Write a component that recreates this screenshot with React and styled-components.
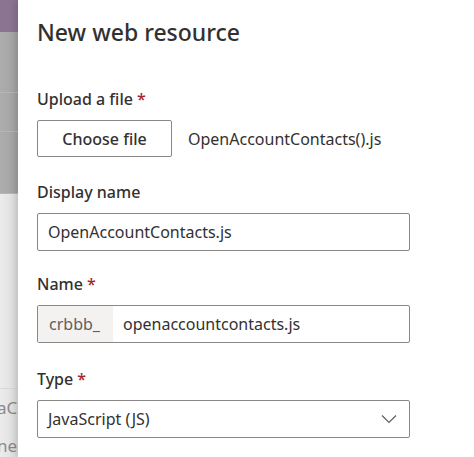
import React from "react";
import styled, { createGlobalStyle } from "styled-components";

const GlobalStyle = createGlobalStyle`
  html, body {
    margin: 0;
    padding: 0;
    background: #fff;
  }
  body {
    font-family: "Noto Sans", "Open Sans", "Liberation Sans", sans-serif;
    color: #323130;
  }
`;

const Page = styled.div`
  display: flex;
  width: 474px;
  height: 457px;
  overflow: hidden;
`;

const Backdrop = styled.div`
  width: 18px;
  flex: none;
  display: flex;
  flex-direction: column;
  overflow: hidden;
`;

const BackdropHeader = styled.div`
  flex: none;
  height: 32px;
  background: #8b7392;
`;

const BackdropBand = styled.div`
  flex: none;
  height: ${(p) => p.h}px;
  background: linear-gradient(90deg, #adadad, #a2a2a2);
  border-bottom: 1px solid #b6b6b6;
`;

const BackdropLower = styled.div`
  flex: 1;
  min-height: 0;
  overflow: hidden;
  background: linear-gradient(90deg, #ececec, #dcdcdc);
  display: flex;
  flex-direction: column;
  padding-top: 194px;
`;

const BackdropText = styled.div`
  flex: none;
  font-size: 17px;
  color: #8a8a8a;
  white-space: nowrap;
  height: ${(p) => p.h}px;
  line-height: ${(p) => p.h}px;
  border-top: ${(p) => (p.line ? "1px solid #d6d6d6" : "none")};
  margin-left: -3px;
`;

const Panel = styled.div`
  flex: 1;
  background: #fff;
  box-shadow: -3px 0 6px rgba(0, 0, 0, 0.12);
  padding: 14px 0 0 19px;
  display: flex;
  flex-direction: column;
`;

const Title = styled.h1`
  margin: 0 0 38px 0;
  font-size: 23px;
  font-weight: 500;
  line-height: 36px;
  color: #323130;
`;

const Field = styled.div`
  display: flex;
  flex-direction: column;
  margin-bottom: ${(p) => p.mb}px;
`;

const Label = styled.label`
  font-size: 16px;
  font-weight: 500;
  line-height: 22px;
  margin-bottom: 10px;
  color: #323130;
`;

const Required = styled.span`
  color: #a4262c;
  margin-left: 4px;
`;

const UploadRow = styled.div`
  display: flex;
  align-items: center;
  gap: 16px;
`;

const ChooseButton = styled.button`
  width: 135px;
  height: 37px;
  background: #fff;
  border: 1px solid #8a8886;
  border-radius: 2px;
  font-family: inherit;
  font-size: 16px;
  font-weight: 500;
  color: #323130;
  padding: 0;
`;

const FileName = styled.span`
  font-size: 16px;
  color: #323130;
`;

const Box = styled.div`
  width: 373px;
  height: 38px;
  box-sizing: border-box;
  border: 1px solid #8a8886;
  border-radius: 2px;
  display: flex;
  align-items: stretch;
  font-size: 16px;
  color: #323130;
`;

const Prefix = styled.div`
  background: #f3f2f1;
  color: #605e5c;
  display: flex;
  align-items: center;
  padding: 0 10px 0 11px;
  width: 54px;
`;

const Value = styled.div`
  flex: 1;
  display: flex;
  align-items: center;
  padding-left: 10px;
`;

const Chevron = styled.div`
  width: 40px;
  display: flex;
  align-items: center;
  justify-content: center;
  color: #605e5c;
`;

export default function App() {
  return (
    <>
      <GlobalStyle />
      <Page>
        <Backdrop>
          <BackdropHeader />
          <BackdropBand h={60} />
          <BackdropBand h={38} />
          <BackdropBand h={61} />
          <BackdropLower>
            <BackdropText h={38} line>aC</BackdropText>
            <BackdropText h={38}>ne</BackdropText>
          </BackdropLower>
        </Backdrop>
        <Panel>
          <Title>New web resource</Title>
          <Field mb={24}>
            <Label>
              Upload a file<Required>*</Required>
            </Label>
            <UploadRow>
              <ChooseButton>Choose file</ChooseButton>
              <FileName>OpenAccountContacts().js</FileName>
            </UploadRow>
          </Field>
          <Field mb={22}>
            <Label>Display name</Label>
            <Box>
              <Value>OpenAccountContacts.js</Value>
            </Box>
          </Field>
          <Field mb={25}>
            <Label>
              Name<Required>*</Required>
            </Label>
            <Box>
              <Prefix>crbbb_</Prefix>
              <Value>openaccountcontacts.js</Value>
            </Box>
          </Field>
          <Field mb={0}>
            <Label>
              Type<Required>*</Required>
            </Label>
            <Box>
              <Value>JavaScript (JS)</Value>
              <Chevron>
                <svg width="16" height="10" viewBox="0 0 16 10">
                  <path d="M1 1.5 L8 8.5 L15 1.5" fill="none" stroke="#605e5c" strokeWidth="1.2" />
                </svg>
              </Chevron>
            </Box>
          </Field>
        </Panel>
      </Page>
    </>
  );
}
